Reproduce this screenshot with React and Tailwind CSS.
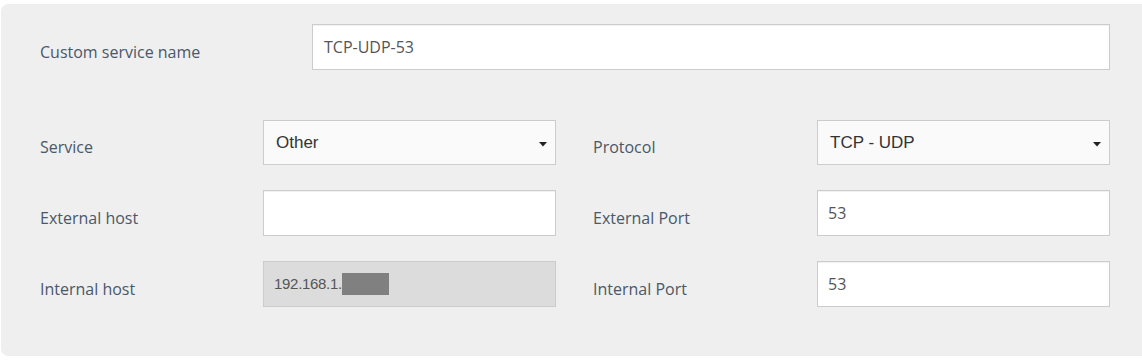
import React from "react";

const labelCls =
  "text-[16px] text-[#4a5868] pt-[9px] font-['Open_Sans',sans-serif]";

function Caret() {
  return (
    <svg width="8" height="5" viewBox="0 0 8 5" className="absolute right-[8px] top-[21px]">
      <path d="M0 0 L8 0 L4 4.5 Z" fill="#222" />
    </svg>
  );
}

function Select({ value }) {
  return (
    <div className="relative w-[293px] h-[45px] border border-[#cccccc] bg-[#fafafa] flex items-center pl-[12px] text-[17px] text-[#333] font-['Liberation_Sans',Arial,sans-serif]">
      {value}
      <Caret />
    </div>
  );
}

function Input({ children, disabled }) {
  return (
    <div
      className={
        "w-[293px] h-[46px] border border-[#cccccc] flex items-center pl-[10px] text-[16px] text-[#555] font-['Open_Sans',sans-serif] " +
        (disabled ? "bg-[#dcdcdc]" : "bg-white shadow-[inset_0_1px_1px_rgba(0,0,0,0.06)]")
      }
    >
      {children}
    </div>
  );
}

function Row({ label, width, children }) {
  return (
    <div className="flex items-center">
      <div className={labelCls + " " + width}>{label}</div>
      {children}
    </div>
  );
}

export default function App() {
  return (
    <div className="w-[1142px] h-[360px] overflow-hidden bg-white">
      <div className="ml-[1px] mt-[4px] w-[1160px] h-[352px] rounded-[7px] bg-[#efefef] pl-[39px] pt-[20px]">
        <div className="flex items-center">
          <div className={labelCls + " w-[272px]"}>Custom service name</div>
          <div className="w-[798px] h-[46px] border border-[#cccccc] bg-white shadow-[inset_0_1px_1px_rgba(0,0,0,0.06)] flex items-center pl-[11px] text-[16px] text-[#555] font-['Open_Sans',sans-serif]">
            TCP-UDP-53
          </div>
        </div>

        <div className="mt-[50px] flex flex-col gap-[25px]">
          <div className="flex gap-[37px]">
            <Row label="Service" width="w-[223px]">
              <Select value="Other" />
            </Row>
            <Row label="Protocol" width="w-[224px]">
              <Select value="TCP - UDP" />
            </Row>
          </div>
          <div className="flex gap-[37px]">
            <Row label="External host" width="w-[223px]">
              <Input />
            </Row>
            <Row label="External Port" width="w-[224px]">
              <Input>53</Input>
            </Row>
          </div>
          <div className="flex gap-[37px]">
            <Row label="Internal host" width="w-[223px]">
              <Input disabled>
                <span className="font-['Liberation_Sans',Arial,sans-serif] text-[15px] text-[#555] tracking-[-0.3px]">
                  192.168.1.
                </span>
                <span className="inline-block w-[47px] h-[22px] bg-[#808080]" />
              </Input>
            </Row>
            <Row label="Internal Port" width="w-[224px]">
              <Input>53</Input>
            </Row>
          </div>
        </div>
      </div>
    </div>
  );
}
